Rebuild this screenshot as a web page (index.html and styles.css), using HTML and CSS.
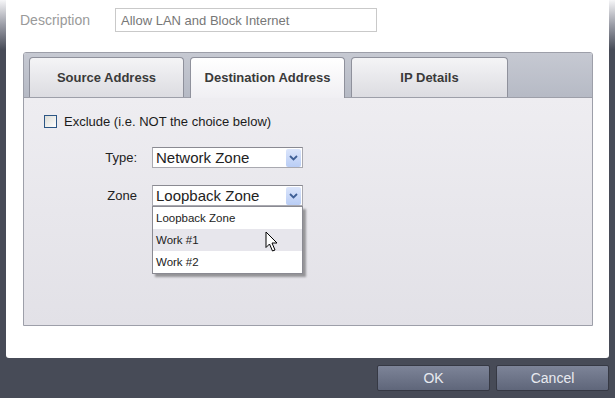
FILE: index.html
```html
<!DOCTYPE html>
<html>
<head>
<meta charset="utf-8">
<link rel="stylesheet" href="styles.css">
</head>
<body>
<div class="dialog">
  <div class="desc-row">
    <span class="desc-label">Description</span>
    <div class="desc-input">Allow LAN and Block Internet</div>
  </div>
  <div class="tabbox">
    <div class="tabstrip">
      <div class="tab">Source Address</div>
      <div class="tab active">Destination Address</div>
      <div class="tab wide">IP Details</div>
    </div>
    <div class="tabbody">
      <label class="check-row"><span class="checkbox"></span><span>Exclude (i.e. NOT the choice below)</span></label>
      <div class="field first">
        <span class="field-label">Type:</span>
        <div class="select"><span class="select-text">Network Zone</span><span class="arrow"><svg width="9" height="6" viewBox="0 0 9 6"><path d="M1 1 L4.5 4.5 L8 1" fill="none" stroke="#3f5f96" stroke-width="1.8"/></svg></span></div>
      </div>
      <div class="field">
        <span class="field-label">Zone</span>
        <div class="select open"><span class="select-text">Loopback Zone</span><span class="arrow"><svg width="9" height="6" viewBox="0 0 9 6"><path d="M1 1 L4.5 4.5 L8 1" fill="none" stroke="#3f5f96" stroke-width="1.8"/></svg></span>
          <ul class="dropdown">
            <li>Loopback Zone</li>
            <li class="hover">Work #1</li>
            <li>Work #2</li>
          </ul>
          <svg class="cursor" width="14" height="22" viewBox="0 0 14 22"><path d="M1 1 L1 16.5 L4.5 13 L7.5 20 L10 19 L7 12 L12 12 Z" fill="#fff" stroke="#000" stroke-width="1" stroke-linejoin="miter"/></svg>
        </div>
      </div>
    </div>
  </div>
</div>
<div class="buttons">
  <div class="btn">OK</div>
  <div class="btn">Cancel</div>
</div>
</body>
</html>
```
FILE: styles.css
```css
html, body {
  margin: 0;
  padding: 0;
}
body {
  width: 615px;
  height: 398px;
  overflow: hidden;
  background: linear-gradient(to bottom, #f6f6f8 0px, #9a9ca6 25px, #474b57 50px) #474b57;
  font-family: "Liberation Sans", Arial, sans-serif;
}
.dialog {
  margin: 0 6px;
  height: 358px;
  background: #fff;
  border-radius: 0 0 3px 3px;
  box-sizing: border-box;
  padding-top: 8px;
  display: flex;
  flex-direction: column;
}
.desc-row {
  display: flex;
  align-items: center;
  padding-left: 14px;
}
.desc-label {
  width: 95px;
  font-size: 14px;
  color: #9a9a9a;
}
.desc-input {
  width: 262px;
  height: 24px;
  box-sizing: border-box;
  border: 1px solid #c9c9c9;
  font-size: 13px;
  color: #777;
  padding: 4px 0 0 5px;
}
.tabbox {
  margin: 20px 0 0 17px;
  width: 570px;
  height: 274px;
  box-sizing: border-box;
  border: 1px solid #9d9fa9;
  border-radius: 3px 3px 0 0;
  display: flex;
  flex-direction: column;
}
.tabstrip {
  height: 44px;
  box-sizing: border-box;
  background: linear-gradient(to bottom, #c6c9d2, #b6bac5);
  display: flex;
  align-items: flex-end;
  padding-left: 5px;
  gap: 6px;
  border-radius: 2px 2px 0 0;
}
.tab {
  width: 155px;
  height: 40px;
  box-sizing: border-box;
  border: 1px solid #8f919c;
  border-bottom: none;
  border-radius: 4px 4px 0 0;
  background: linear-gradient(to bottom, #f4f4f6, #dcdce1);
  font-weight: bold;
  font-size: 13px;
  color: #3a3a3a;
  display: flex;
  align-items: center;
  justify-content: center;
  padding-bottom: 1px;
}
.tab.active {
  background: linear-gradient(to bottom, #ffffff, #f0eff3);
  height: 41px;
  margin-bottom: -1px;
  position: relative;
}
.tab.wide {
  width: 157px;
}
.tabbody {
  flex: 1;
  border-top: 1px solid #9d9fa9;
  background: linear-gradient(to bottom, #eeedf1, #e2e1e7);
  padding: 16px 0 0 20px;
  display: flex;
  flex-direction: column;
}
.check-row {
  display: flex;
  align-items: center;
  gap: 7px;
  font-size: 13px;
  color: #1c1c1c;
  height: 14px;
}
.checkbox {
  width: 13px;
  height: 13px;
  box-sizing: border-box;
  border: 1px solid #2c5685;
  background: linear-gradient(135deg, #dcdcd6, #ffffff);
}
.field {
  display: flex;
  align-items: center;
  height: 21px;
  margin-top: 17px;
  margin-left: -20px;
  gap: 15px;
}
.field.first {
  margin-top: 19px;
}
.field-label {
  width: 113px;
  text-align: right;
  font-size: 13px;
  color: #222;
}
.select {
  position: relative;
  width: 151px;
  height: 21px;
  box-sizing: border-box;
  border: 1px solid #a9a9b0;
  border-top-color: #8a8a92;
  background: #fff;
  display: flex;
  align-items: center;
}
.select-text {
  flex: 1;
  font-size: 15px;
  color: #222;
  padding-left: 3px;
}
.arrow {
  width: 15px;
  height: 18px;
  margin-right: 1px;
  background: linear-gradient(to bottom, #dbe5fb, #b9cdf5);
  border-radius: 2px;
  display: flex;
  align-items: center;
  justify-content: center;
}
.dropdown {
  position: absolute;
  left: -1px;
  top: 20px;
  width: 151px;
  margin: 0;
  padding: 0;
  list-style: none;
  background: #fff;
  border: 1px solid #8a8a92;
  box-sizing: border-box;
  box-shadow: 3px 3px 2px rgba(0,0,0,0.35);
}
.dropdown li {
  height: 22px;
  line-height: 22px;
  font-size: 11.5px;
  color: #222;
  padding-left: 3px;
}
.dropdown li.hover {
  background: #e7e6ec;
}
.cursor {
  position: absolute;
  left: 112px;
  top: 45px;
}
.buttons {
  display: flex;
  justify-content: flex-end;
  gap: 6px;
  padding: 7px 6px 0 0;
}
.btn {
  width: 113px;
  height: 26px;
  box-sizing: border-box;
  border: 1px solid #363944;
  border-radius: 2px;
  background: linear-gradient(to bottom, #7d8498, #5f667a);
  color: #e8eaf0;
  font-size: 14px;
  display: flex;
  align-items: center;
  justify-content: center;
}
```
